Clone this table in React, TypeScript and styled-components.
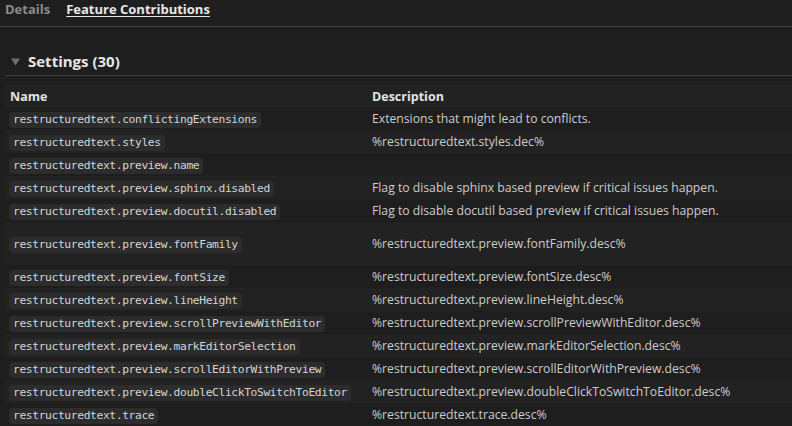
import React from "react";
import styled, { createGlobalStyle } from "styled-components";

const GlobalStyle = createGlobalStyle`
  html, body { margin: 0; padding: 0; background: #1e1e1e; overflow: hidden; }
  * { box-sizing: border-box; }
`;

const UI = `"Open Sans", "Noto Sans", sans-serif`;
const MONO = `"DejaVu Sans Mono", "Liberation Mono", monospace`;

const Page = styled.div`
  width: 792px;
  height: 426px;
  overflow: hidden;
  background: #1e1e1e;
  font-family: ${UI};
`;

const NavBar = styled.div`
  height: 27px;
  border-bottom: 1px solid #444444;
  display: flex;
  align-items: flex-start;
  gap: 16px;
  padding-left: 5px;
`;

const Tab = styled.span<{ $active?: boolean }>`
  font-size: 13px;
  font-weight: 700;
  line-height: 18px;
  color: ${(p) => (p.$active ? "#e7e7e7" : "#8b8b8b")};
  text-decoration: ${(p) => (p.$active ? "underline" : "none")};
  text-underline-offset: 2px;
`;

const Section = styled.div`
  padding-left: 5px;
`;

const SectionHeader = styled.div`
  display: flex;
  align-items: center;
  gap: 8px;
  height: 26px;
  margin-top: 23px;
  padding: 1px 0 4px 6px;
  border-bottom: 1px solid #3c3c3c;
`;

const Chevron = styled.svg`
  width: 9px;
  height: 9px;
  flex: none;
`;

const Title = styled.span`
  font-size: 15px;
  font-weight: 700;
  color: #e7e7e7;
  line-height: 20px;
`;

const Table = styled.div`
  margin-top: 9px;
  display: flex;
  flex-direction: column;
`;

const Row = styled.div<{ $h?: number; $light?: boolean }>`
  display: grid;
  grid-template-columns: 363px 1fr;
  align-items: center;
  height: ${(p) => p.$h ?? 23}px;
  background: ${(p) => (p.$light ? "#222222" : "transparent")};
`;

const HeadCell = styled.div`
  padding: 1px 0 0 5px;
  font-size: 12.5px;
  font-weight: 700;
  color: #e3e3e3;
  line-height: 18px;
  &:last-child { padding-left: 4px; }
`;

const Cell = styled.div`
  padding: 1px 0 0 4px;
  font-size: 12.2px;
  color: #cccccc;
  line-height: 18px;
  white-space: nowrap;
`;

const Code = styled.code`
  display: inline-block;
  font-family: ${MONO};
  font-size: 11.3px;
  letter-spacing: -0.38px;
  line-height: 16px;
  padding: 0 4px;
  border-radius: 4px;
  background: #2c2c2c;
  color: #d4d4d4;
`;

const rows: { name: string; desc: string; h?: number }[] = [
  { name: "restructuredtext.conflictingExtensions", desc: "Extensions that might lead to conflicts." },
  { name: "restructuredtext.styles", desc: "%restructuredtext.styles.dec%" },
  { name: "restructuredtext.preview.name", desc: "" },
  { name: "restructuredtext.preview.sphinx.disabled", desc: "Flag to disable sphinx based preview if critical issues happen." },
  { name: "restructuredtext.preview.docutil.disabled", desc: "Flag to disable docutil based preview if critical issues happen." },
  { name: "restructuredtext.preview.fontFamily", desc: "%restructuredtext.preview.fontFamily.desc%", h: 43 },
  { name: "restructuredtext.preview.fontSize", desc: "%restructuredtext.preview.fontSize.desc%" },
  { name: "restructuredtext.preview.lineHeight", desc: "%restructuredtext.preview.lineHeight.desc%" },
  { name: "restructuredtext.preview.scrollPreviewWithEditor", desc: "%restructuredtext.preview.scrollPreviewWithEditor.desc%" },
  { name: "restructuredtext.preview.markEditorSelection", desc: "%restructuredtext.preview.markEditorSelection.desc%" },
  { name: "restructuredtext.preview.scrollEditorWithPreview", desc: "%restructuredtext.preview.scrollEditorWithPreview.desc%" },
  { name: "restructuredtext.preview.doubleClickToSwitchToEditor", desc: "%restructuredtext.preview.doubleClickToSwitchToEditor.desc%" },
  { name: "restructuredtext.trace", desc: "%restructuredtext.trace.desc%" },
];

export default function App() {
  return (
    <Page>
      <GlobalStyle />
      <NavBar>
        <Tab>Details</Tab>
        <Tab $active>Feature Contributions</Tab>
      </NavBar>
      <Section>
        <SectionHeader>
          <Chevron viewBox="0 0 9 9">
            <path d="M0 1.5 L9 1.5 L4.5 8.5 Z" fill="#6e6e6e" />
          </Chevron>
          <Title>Settings (30)</Title>
        </SectionHeader>
        <Table>
          <Row $h={22} $light>
            <HeadCell>Name</HeadCell>
            <HeadCell>Description</HeadCell>
          </Row>
          {rows.map((r, i) => (
            <Row key={r.name} $h={r.h} $light={i % 2 === 1}>
              <Cell>
                <Code>{r.name}</Code>
              </Cell>
              <Cell>{r.desc}</Cell>
            </Row>
          ))}
        </Table>
      </Section>
    </Page>
  );
}
